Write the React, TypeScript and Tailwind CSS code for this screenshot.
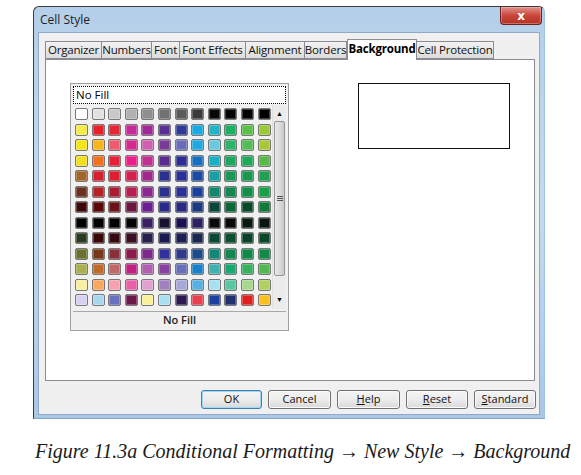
import React from 'react';

const ui = { fontFamily: '"Open Sans", "Noto Sans", Arial, sans-serif' };

// 12 columns x 13 rows, same order as the LibreOffice standard palette
const palette: string[][] = [
  ['#ffffff', '#e2e2e2', '#c8c8c8', '#b0b0b0', '#8e8e8e', '#717171', '#5a5a5a', '#3a3a3a', '#080808', '#030303', '#020202', '#000000'],
  ['#f4ec4a', '#e8202a', '#e62634', '#c72a98', '#9e2a96', '#5a2e92', '#2d3b97', '#19a8e0', '#22b5c8', '#1ab260', '#5cbf4a', '#9cc83a'],
  ['#f3e51a', '#f8b41a', '#ee5a6e', '#d42a90', '#d060b0', '#7a3a9a', '#6a6cb8', '#1fa9e0', '#6ac8dc', '#2cb46a', '#56bc58', '#a8c838'],
  ['#f0e020', '#f07020', '#e82038', '#e8208a', '#c03090', '#5a2a90', '#2c2c92', '#1a6ec0', '#18b0c8', '#1aa860', '#20a858', '#58b848'],
  ['#a0662a', '#d82030', '#e02030', '#d42050', '#a02890', '#2c3092', '#2c3092', '#1c4ca0', '#18a0a8', '#1a9858', '#1a9850', '#20a050'],
  ['#6a3020', '#b82028', '#a81e30', '#b42050', '#8a2890', '#2c3090', '#2c3090', '#1c4098', '#108870', '#108850', '#109048', '#18a048'],
  ['#3a0808', '#5a0808', '#6a1418', '#6a1840', '#6a2090', '#2a2a8a', '#2a2a80', '#1c3a80', '#08483a', '#086838', '#084828', '#107a3a'],
  ['#000000', '#020202', '#030303', '#050505', '#3a2060', '#1a1030', '#1a1050', '#2a2060', '#0a0a0a', '#080808', '#0a1a10', '#081810'],
  ['#2a3a20', '#380808', '#380a10', '#3a1020', '#2a2050', '#1a1850', '#1c2050', '#1a2850', '#084838', '#085030', '#084028', '#084828'],
  ['#6a7030', '#7a3818', '#8a3038', '#8a1a4a', '#7a2a8a', '#3030a0', '#30388a', '#1c4c8a', '#108878', '#108850', '#108848', '#128a48'],
  ['#a8b050', '#c06a28', '#c06868', '#c02080', '#b060b0', '#8a40a0', '#6870b8', '#1880c8', '#40b0b0', '#18a870', '#38b060', '#50b850'],
  ['#f8f0a0', '#f8a860', '#f8a0b0', '#e860a8', '#e0a0d0', '#a080c0', '#a8a8d8', '#58b0e0', '#a8e0f0', '#58c8a0', '#a8d890', '#b0d060'],
  ['#d8d0f0', '#a8d8f0', '#6870c0', '#6a1848', '#f8f098', '#a8e0f0', '#2a1a50', '#e84050', '#1a40a0', '#203070', '#e02020', '#f8c020'],
];

const tabs = [
  { label: 'Organizer', w: 'w-[57px]' },
  { label: 'Numbers', w: 'w-[51px]' },
  { label: 'Font', w: 'w-[29px]' },
  { label: 'Font Effects', w: 'w-[67px]' },
  { label: 'Alignment', w: 'w-[60px]' },
  { label: 'Borders', w: 'w-[43px]' },
  { label: 'Background', w: 'w-[70px]', active: true },
  { label: 'Cell Protection', w: 'w-[78px]' },
];

function DialogButton({ children, w, primary }: { children: React.ReactNode; w: string; primary?: boolean }) {
  return (
    <div
      className={`${w} h-[19px] flex items-center justify-center rounded-[3px] border text-[11px] text-[#111] bg-gradient-to-b from-[#f4f4f4] via-[#ececec] to-[#d9d9d9] ${
        primary ? 'border-[#3c7fb1] shadow-[inset_0_0_0_1px_#9fd8f5]' : 'border-[#707070] shadow-[inset_0_0_0_1px_#fbfbfb]'
      }`}
    >
      {children}
    </div>
  );
}

function Scrollbar() {
  return (
    <div className="w-[14px] flex flex-col bg-[#ebebeb] border-l border-[#e0e0e0]">
      <div className="h-[16px] flex items-center justify-center text-[7px] leading-none text-black">▲</div>
      <div className="mx-[1px] h-[155px] rounded-[2px] border border-[#979797] bg-gradient-to-r from-[#e9e9e9] via-[#dcdcdc] to-[#c9c9c9] flex flex-col items-center justify-center gap-[1px]">
        <div className="w-[6px] h-[1px] bg-[#555]" />
        <div className="w-[6px] h-[1px] bg-[#555]" />
        <div className="w-[6px] h-[1px] bg-[#555]" />
      </div>
      <div className="flex-1" />
      <div className="h-[18px] flex items-center justify-center text-[7px] leading-none text-black">▼</div>
    </div>
  );
}

function ColorPalette() {
  return (
    <div className="w-[219px] h-[248px] border border-[#a0a0a0] bg-[#f0f0f0] p-[2px] flex flex-col">
      <div className="h-[18px] bg-white border border-dotted border-black flex items-center px-[2px] text-[11.5px] text-black">
        No Fill
      </div>
      <div className="flex h-[206px] mt-[1px]">
        <div className="flex-1 pl-[2px] pt-[3px]">
          <div className="grid grid-cols-[repeat(12,13px)] auto-rows-[12px] gap-x-[3.6px] gap-y-[3.5px]">
            {palette.flat().map((c, i) => (
              <div
                key={i}
                className="rounded-[2px] border border-[#787878] shadow-[inset_0_0_0_1px_rgba(255,255,255,0.25)]"
                style={{ backgroundColor: c }}
              />
            ))}
          </div>
        </div>
        <Scrollbar />
      </div>
      <div className="border-t border-[#a8a8a8] mt-[2px] flex-1 flex items-center justify-center text-[11px] font-semibold text-[#222]">
        No Fill
      </div>
    </div>
  );
}

export default function App() {
  return (
    <div className="w-[581px] h-[475px] bg-white overflow-hidden" style={ui}>
      {/* Window */}
      <div className="ml-[33px] mt-[6px] w-[512px] h-[413px] flex flex-col rounded-t-[6px] border-t border-l border-[#3b3b3b] border-r border-r-[#9cc0e0] border-b border-b-[#7fa6cc] bg-gradient-to-b from-[#b4cfe9] via-[#c4daf0] to-[#a9c8e6]">
        {/* Title bar */}
        <div className="h-[25px] flex justify-between pl-[6px] pr-[2px]">
          <span className="text-[12px] text-[#1e1e1e] pt-[4px]">Cell Style</span>
          <div className="w-[42px] h-[18px] rounded-b-[4px] border border-[#6b1f1f] border-t-0 bg-gradient-to-b from-[#e0908a] via-[#c9463c] to-[#b43222] flex items-center justify-center shadow-[inset_0_0_0_1px_rgba(255,220,220,0.35)]">
            <span className="text-white font-bold text-[12px] leading-none" style={{ fontFamily: '"DejaVu Sans", sans-serif' }}>
              x
            </span>
          </div>
        </div>

        {/* Body */}
        <div className="mx-[4px] mb-[3px] flex-1 bg-[#f0f0f0] border border-[#8fa9c6] pl-[6px] pt-[6px] flex flex-col">
          {/* Tabs */}
          <div className="flex items-end h-[20px]">
            {tabs.map((t) => (
              <div
                key={t.label}
                className={`${t.w} flex items-center justify-center text-[11.5px] tracking-[-0.2px] whitespace-nowrap border border-[#898c95] ${
                  t.active
                    ? 'h-[21px] bg-white border-b-0 font-bold text-black -mb-[1px] relative z-10 pb-[2px]'
                    : 'h-[18px] bg-gradient-to-b from-[#f2f2f2] to-[#dcdcdc] text-[#111] -ml-[1px] first:ml-0'
                }`}
              >
                {t.label}
              </div>
            ))}
          </div>

          {/* Tab panel */}
          <div className="w-[490px] h-[322px] bg-white border border-[#898c95] flex items-start pl-[24px] pt-[23px]">
            <ColorPalette />
            <div className="ml-[69px] w-[152px] h-[66px] border-[1.5px] border-[#111] bg-white" />
          </div>

          {/* Buttons */}
          <div className="w-[491px] mt-[9px] flex justify-end gap-[6px]">
            <DialogButton w="w-[61px]" primary>OK</DialogButton>
            <DialogButton w="w-[63px]">Cancel</DialogButton>
            <DialogButton w="w-[63px]"><span><u>H</u>elp</span></DialogButton>
            <DialogButton w="w-[62px]"><span><u>R</u>eset</span></DialogButton>
            <DialogButton w="w-[62px]"><span><u>S</u>tandard</span></DialogButton>
          </div>
        </div>
      </div>

      {/* Caption */}
      <div
        className="mt-[22px] pl-[35px] text-[20px] italic text-[#1a1a1a] leading-none whitespace-nowrap"
        style={{ fontFamily: '"Liberation Serif", "Times New Roman", serif' }}
      >
        Figure 11.3a Conditional Formatting → New Style → Background
      </div>
    </div>
  );
}
